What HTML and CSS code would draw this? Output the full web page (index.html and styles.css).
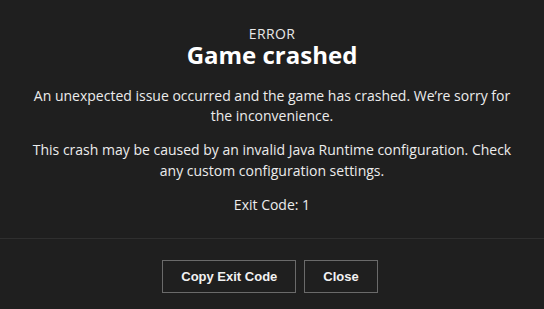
FILE: index.html
```html
<!DOCTYPE html>
<html>
<head>
<meta charset="utf-8">
<link rel="stylesheet" href="styles.css">
</head>
<body>
<div class="dialog">
  <div class="content">
    <div class="eyebrow">ERROR</div>
    <h1 class="title">Game crashed</h1>
    <p class="msg">An unexpected issue occurred and the game has crashed. We’re sorry for the inconvenience.</p>
    <p class="msg">This crash may be caused by an invalid Java Runtime configuration. Check any custom configuration settings.</p>
    <p class="msg">Exit Code: 1</p>
  </div>
  <div class="footer">
    <button class="btn">Copy Exit Code</button>
    <button class="btn">Close</button>
  </div>
</div>
</body>
</html>
```
FILE: styles.css
```css
html, body {
  margin: 0;
  padding: 0;
  background: #1f1f1f;
}
.dialog {
  width: 544px;
  height: 309px;
  display: flex;
  flex-direction: column;
  font-family: "Open Sans", "Noto Sans", sans-serif;
  color: #ececec;
}
.content {
  height: 239px;
  box-sizing: border-box;
  padding: 25px 24px 0;
  text-align: center;
  border-bottom: 1px solid #2f2f2f;
}
.eyebrow {
  font-size: 14px;
  line-height: 18px;
  letter-spacing: 0.4px;
  color: #e8e8e8;
}
.title {
  margin: 0 0 18.5px;
  font-size: 24px;
  line-height: 24px;
  font-weight: 700;
  color: #ffffff;
}
.msg {
  margin: 0 0 13.5px;
  font-size: 14px;
  line-height: 20.5px;
}
.footer {
  display: flex;
  justify-content: center;
  gap: 8px;
  padding-top: 21px;
  padding-right: 4px;
}
.btn {
  height: 33px;
  box-sizing: border-box;
  background: #1f1f1f;
  border: 1px solid #6a6a6a;
  color: #f2f2f2;
  font-family: "Liberation Sans", Arial, sans-serif;
  font-weight: 700;
  font-size: 13px;
  padding: 0 18px;
}
```
